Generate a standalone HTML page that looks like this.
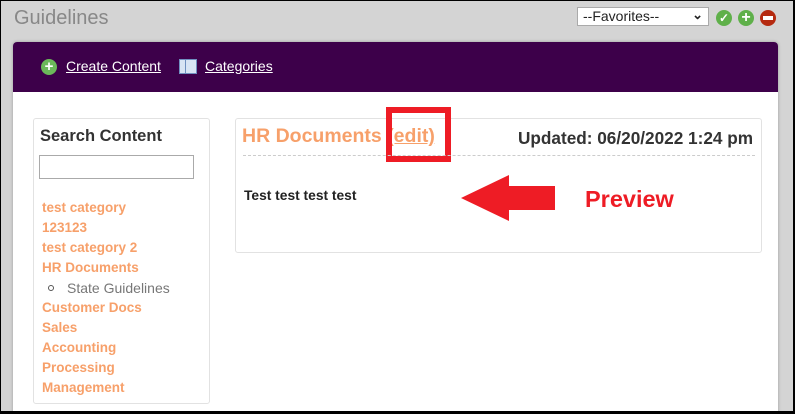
<!DOCTYPE html>
<html><head><style>
body{margin:0;width:795px;height:414px;overflow:hidden;background:#000;font-family:"Liberation Sans",Arial,sans-serif}
#f{position:absolute;left:1px;top:1px;width:792px;height:410px;background:#d4d4d4;overflow:hidden}
.a{position:absolute}
.cat{position:absolute;left:41px;font-size:13.5px;font-weight:bold;color:#f7a06a}
</style></head><body>
<div id="f">
<div class="a" style="left:13px;top:6px;font-size:20px;color:#888">Guidelines</div>
<div class="a" style="left:576px;top:6px;width:132px;height:19px;background:#fff;border:1px solid #aaa;box-sizing:border-box;font-size:14px;color:#222;padding-left:5px;line-height:17px">--Favorites--<span style="position:absolute;right:5px;top:-2px;font-size:13px;font-weight:bold">&#8964;</span></div>
<div class="a" style="left:715px;top:9px;width:16px;height:16px;border-radius:50%;background:#5fb04a;color:#fff;font-size:12px;line-height:16px;text-align:center;font-weight:bold">✓</div>
<div class="a" style="left:737px;top:9px;width:16px;height:16px;border-radius:50%;background:#5fb04a;color:#fff;font-size:16px;line-height:16px;text-align:center;font-weight:bold">+</div>
<div class="a" style="left:759px;top:9px;width:16px;height:16px;border-radius:50%;background:#b52a10"><div class="a" style="left:3px;top:6px;width:10px;height:4px;background:#fff"></div></div>
<div class="a" style="left:12px;top:41px;width:765px;height:380px;background:#fff;border-radius:4px 4px 0 0;box-shadow:0 0 3px #999"></div>
<div class="a" style="left:12px;top:41px;width:765px;height:50px;background:#3d004a;border-radius:4px 4px 0 0"></div>
<div class="a" style="left:40px;top:58px;width:16px;height:16px;border-radius:50%;background:#6bb85a;color:#fff;font-size:15px;line-height:16px;text-align:center;font-weight:bold">+</div>
<div class="a" style="left:65px;top:57px;font-size:14px;color:#fff;text-decoration:underline">Create Content</div>
<div class="a" style="left:178px;top:58px;width:18px;height:15px;background:#d8e4f4;border:1px solid #7090c0;box-sizing:border-box"><div class="a" style="left:5px;top:0;width:1px;height:13px;background:#7090c0"></div></div>
<div class="a" style="left:204px;top:57px;font-size:14px;color:#fff;text-decoration:underline">Categories</div>
<div class="a" style="left:32px;top:117px;width:177px;height:286px;border:1px solid #e2e2e2;border-radius:3px;box-sizing:border-box"></div>
<div class="a" style="left:39px;top:126px;font-size:16.5px;font-weight:bold;color:#333">Search Content</div>
<div class="a" style="left:38px;top:154px;width:155px;height:24px;border:1px solid #aaa;box-sizing:border-box"></div>
<div class="cat" style="top:199px">test category</div>
<div class="cat" style="top:219px">123123</div>
<div class="cat" style="top:239px">test category 2</div>
<div class="cat" style="top:259px">HR Documents</div>
<div class="a" style="left:47px;top:284px;width:4px;height:4px;border:1px solid #555;border-radius:50%"></div>
<div class="a" style="left:66px;top:279px;font-size:14px;color:#777">State Guidelines</div>
<div class="cat" style="top:299px">Customer Docs</div>
<div class="cat" style="top:319px">Sales</div>
<div class="cat" style="top:339px">Accounting</div>
<div class="cat" style="top:359px">Processing</div>
<div class="cat" style="top:379px">Management</div>
<div class="a" style="left:234px;top:117px;width:527px;height:135px;border:1px solid #e2e2e2;border-radius:3px;box-sizing:border-box"></div>
<div class="a" style="left:241px;top:124px;font-size:19.5px;font-weight:bold;color:#f7a06a;white-space:nowrap">HR Documents <span style="text-decoration:underline">(edit)</span></div>
<div class="a" style="left:385px;top:106px;width:65px;height:55px;border:6px solid #ee1c25;box-sizing:border-box"></div>
<div class="a" style="left:517px;top:127px;font-size:17.2px;font-weight:bold;color:#333;white-space:nowrap">Updated: 06/20/2022 1:24 pm</div>
<div class="a" style="left:242px;top:154px;width:512px;border-top:1px dashed #ccc"></div>
<div class="a" style="left:243px;top:187px;font-size:13.8px;font-weight:bold;color:#222">Test test test test</div>
<svg class="a" style="left:458px;top:173px" width="100" height="48"><polygon points="2,24 50,1 50,12 96,12 96,36 50,36 50,47" fill="#ee1c25"/></svg>
<div class="a" style="left:584px;top:185px;font-size:23.5px;font-weight:bold;color:#ee1c25">Preview</div>
</div>
</body></html>
